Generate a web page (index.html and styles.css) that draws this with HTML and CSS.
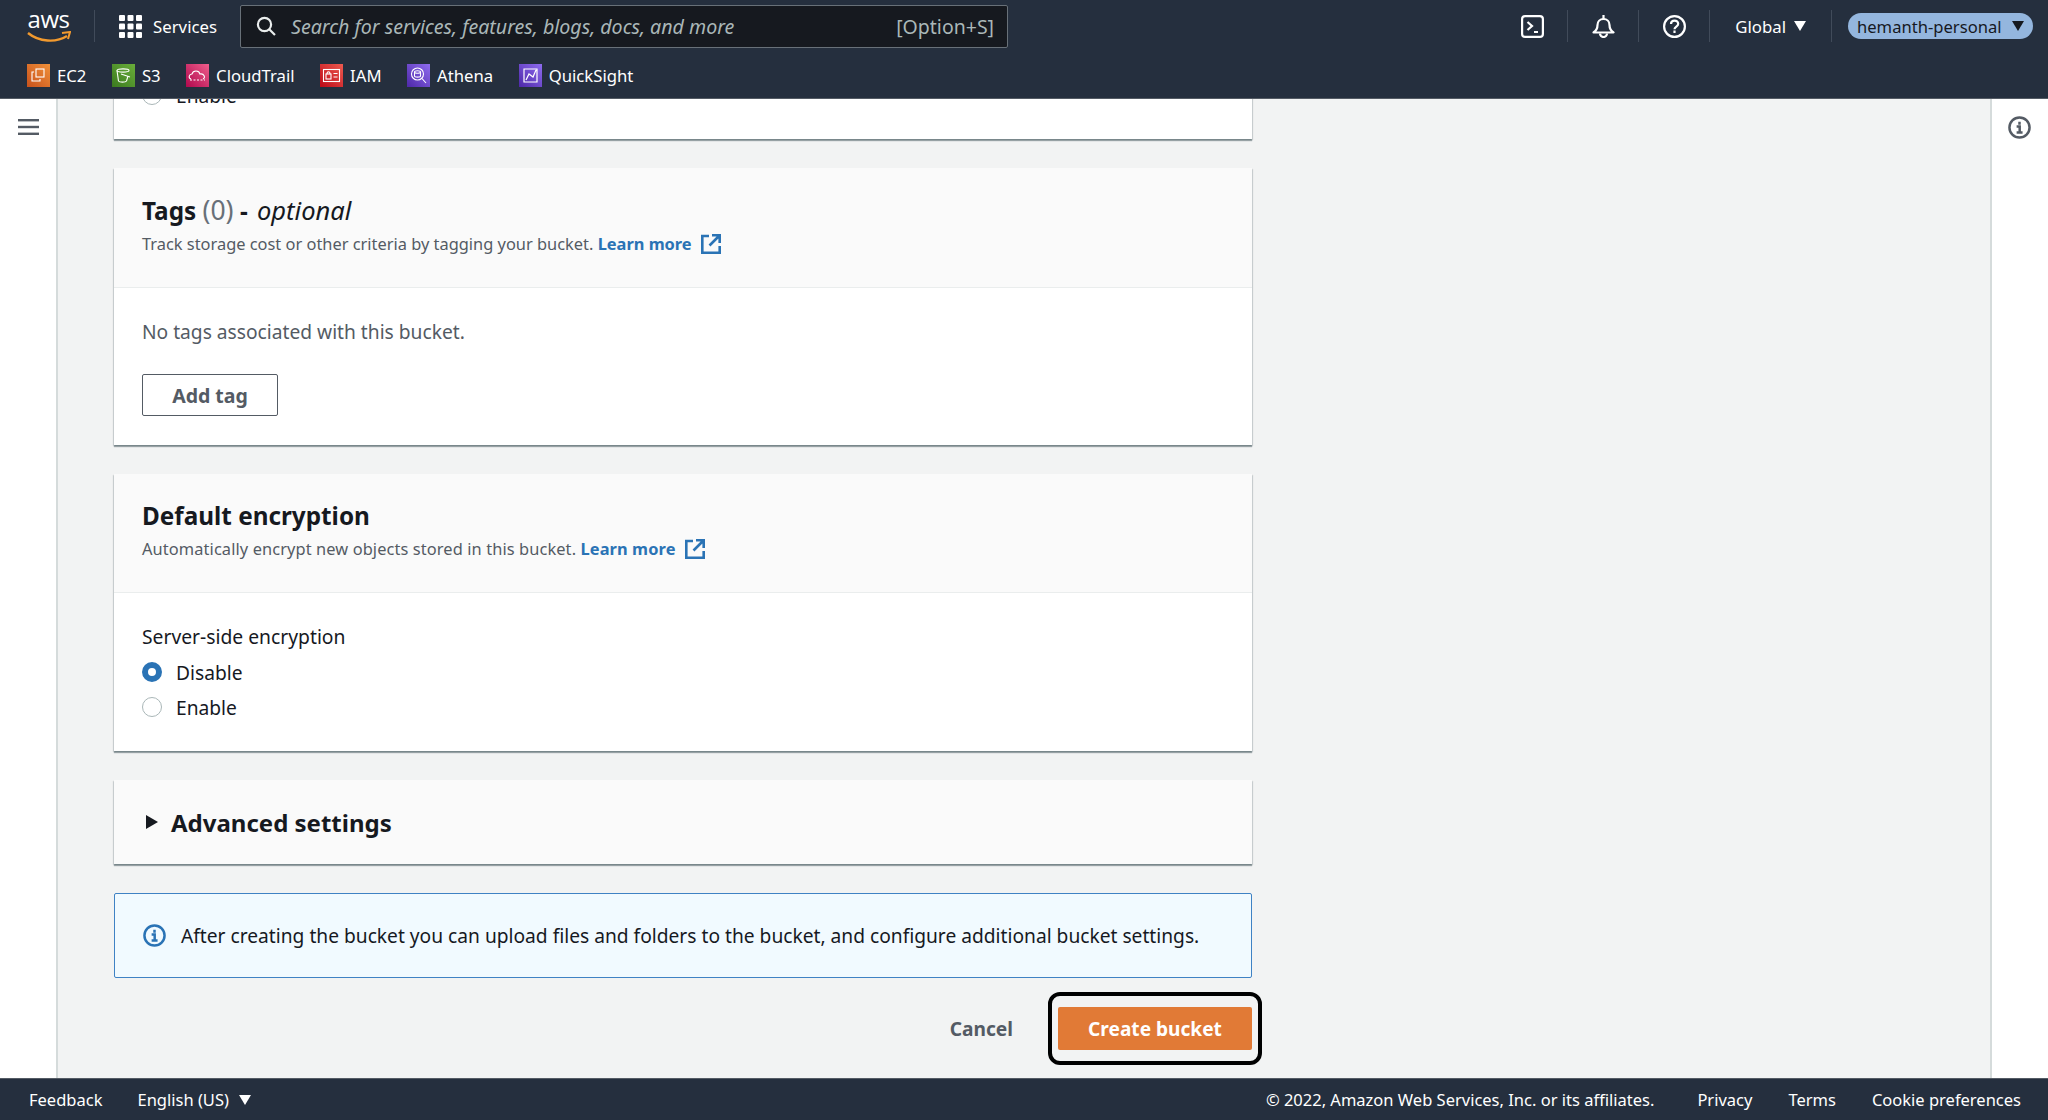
FILE: index.html
```html
<!DOCTYPE html>
<html lang="en">
<head>
<meta charset="utf-8">
<title>Create bucket - S3</title>
<link rel="stylesheet" href="styles.css">
</head>
<body>
<header class="topbar">
  <div class="row-main">
    <div class="logo">
      <span class="logo-text">aws</span>
      <svg class="logo-smile" viewBox="0 0 44 12"><path d="M1 2c11 9 28 10 39 3" fill="none" stroke="#f29a2e" stroke-width="2.4"/><path d="M35 2l8-1-2 7" fill="none" stroke="#f29a2e" stroke-width="2"/></svg>
    </div>
    <span class="sep sep-logo"></span>
    <svg class="grid-icon" viewBox="0 0 23 23" fill="#fff"><rect width="6" height="6" rx="1"/><rect x="8.5" width="6" height="6" rx="1"/><rect x="17" width="6" height="6" rx="1"/><rect y="8.5" width="6" height="6" rx="1"/><rect x="8.5" y="8.5" width="6" height="6" rx="1"/><rect x="17" y="8.5" width="6" height="6" rx="1"/><rect y="17" width="6" height="6" rx="1"/><rect x="8.5" y="17" width="6" height="6" rx="1"/><rect x="17" y="17" width="6" height="6" rx="1"/></svg>
    <span class="services">Services</span>
    <div class="search">
      <svg class="search-icon" viewBox="0 0 20 20" fill="none" stroke="#eaeded" stroke-width="2.2"><circle cx="8.5" cy="8.5" r="6.6"/><path d="M13.5 13.5l5.5 5.5"/></svg>
      <span class="search-text">Search for services, features, blogs, docs, and more</span>
      <span class="search-key">[Option+S]</span>
    </div>
    <div class="nav-right">
      <svg class="nav-icon" viewBox="0 0 23 23" fill="none" stroke="#fff" stroke-width="2.2"><rect x="1.1" y="1.1" width="20.8" height="20.8" rx="3"/><path d="M6.500 7l4.500 4-4.500 4M13 17h4"/></svg>
      <span class="sep sep-icon"></span>
      <svg class="nav-icon" viewBox="0 0 23 23" fill="none" stroke="#fff" stroke-width="2.200"><path d="M1.500 17.500c3-2 4-3.500 4-7.500 0-3.500 2.500-6 6-6s6 2.500 6 6c0 4 1 5.500 4 7.500z" stroke-linejoin="round"/><path d="M11.500 0v4M8 18.500a3.500 3.500 0 0 0 7 0"/></svg>
      <span class="sep sep-icon"></span>
      <svg class="nav-icon" viewBox="0 0 23 23" fill="none" stroke="#fff" stroke-width="2.200"><circle cx="11.500" cy="11.500" r="10.400"/><path d="M8 9c0-4.500 7.200-4.500 7.200-.2 0 2.800-3.700 2.700-3.700 5.400"/><path d="M11.500 15.500v2.500"/></svg>
      <span class="sep sep-icon sep-last"></span>
      <span class="region">Global<i class="caret caret-white"></i></span>
      <span class="sep sep-region"></span>
      <span class="account">hemanth-personal<i class="caret caret-dark"></i></span>
    </div>
  </div>
  <nav class="row-fav">
    <a class="fav"><svg class="fav-icon ec2" viewBox="0 0 23 23" fill="none" stroke="#fff" stroke-width="1.100"><rect x="9" y="5" width="8" height="8"/><path d="M7 8H5v9h8v-2"/></svg>EC2</a>
    <a class="fav"><svg class="fav-icon s3" viewBox="0 0 23 23" fill="none" stroke="#fff" stroke-width="1.100"><ellipse cx="11" cy="6.500" rx="6" ry="1.600"/><path d="M5 6.500l1.500 10.500c1 1.500 7 1.500 8 0L16 12M9 10l9 3"/></svg>S3</a>
    <a class="fav"><svg class="fav-icon trail" viewBox="0 0 23 23" fill="none" stroke="#fff" stroke-width="1.100"><path d="M5 15c-3-1-2-5 1-5 1-4 7-4 8 0 4-1 6 4 3 5"/><path d="M4 16h15" stroke-dasharray="2 1.500"/></svg>CloudTrail</a>
    <a class="fav"><svg class="fav-icon iam" viewBox="0 0 23 23" fill="none" stroke="#fff" stroke-width="1.100"><rect x="3.500" y="5.500" width="16" height="12"/><rect x="6" y="10" width="5" height="5"/><path d="M7 10c0-3 3-3 3 0M13.500 9.500h4M13.500 13h4"/></svg>IAM</a>
    <a class="fav"><svg class="fav-icon athena" viewBox="0 0 23 23" fill="none" stroke="#fff" stroke-width="1.100"><circle cx="10.500" cy="10" r="6"/><ellipse cx="10.500" cy="8" rx="3" ry="1.200"/><path d="M7.500 8v4c0 1.500 6 1.500 6 0V8M15 14.500l4 4.500"/></svg>Athena</a>
    <a class="fav"><svg class="fav-icon quick" viewBox="0 0 23 23" fill="none" stroke="#fff" stroke-width="1.200"><path d="M5 5v13h13V5zM7 16l3-6 4 3 3-7"/></svg>QuickSight</a>
  </nav>
</header>

<div class="shell">
  <aside class="rail rail-left">
    <svg class="rail-icon menu-icon" viewBox="0 0 21 16" fill="#545b64"><rect width="21" height="2.400"/><rect y="6.800" width="21" height="2.400"/><rect y="13.600" width="21" height="2.400"/></svg>
  </aside>
  <main class="content">
    <section class="card">
      <div class="card-body">
        <div class="radio-row"><span class="radio"></span>Enable</div>
      </div>
    </section>

    <section class="card">
      <div class="card-head card-head-tags">
        <h2 class="card-title">Tags <span class="count">(0)</span> <span class="dash">-</span> <em class="optional">optional</em></h2>
        <p class="card-sub">Track storage cost or other criteria by tagging your bucket. <a class="link">Learn more<svg class="ext" viewBox="0 0 20 20" fill="none" stroke="#2a73b5" stroke-width="2.600"><path d="M8 2H1.300v16.700h17.400V12M11 1.300h7.700V9M18.500 1.500L8.500 11.500"/></svg></a></p>
      </div>
      <div class="card-body card-body-tags">
        <p class="muted">No tags associated with this bucket.</p>
        <button class="btn-normal">Add tag</button>
      </div>
    </section>

    <section class="card">
      <div class="card-head">
        <h2 class="card-title">Default encryption</h2>
        <p class="card-sub card-sub-wide">Automatically encrypt new objects stored in this bucket. <a class="link">Learn more<svg class="ext" viewBox="0 0 20 20" fill="none" stroke="#2a73b5" stroke-width="2.600"><path d="M8 2H1.300v16.700h17.400V12M11 1.300h7.700V9M18.500 1.500L8.500 11.500"/></svg></a></p>
      </div>
      <div class="card-body">
        <div class="field-label">Server-side encryption</div>
        <div class="radio-row"><span class="radio radio-on"></span>Disable</div>
        <div class="radio-row"><span class="radio"></span>Enable</div>
      </div>
    </section>

    <section class="card card-collapsed">
      <svg class="expand" viewBox="0 0 12 14" fill="#16191f"><path d="M0 0l12 7-12 7z"/></svg>
      <h2 class="collapsed-title">Advanced settings</h2>
    </section>

    <div class="alert">
      <svg class="alert-icon" viewBox="0 0 24 24" fill="none" stroke="#2a73b5" stroke-width="2.600"><circle cx="12" cy="12" r="10.500"/><path d="M9 11h3.200v6M9 17.200h6.200M12 6v3" /></svg>
      <span>After creating the bucket you can upload files and folders to the bucket, and configure additional bucket settings.</span>
    </div>

    <div class="actions">
      <button class="btn-cancel">Cancel</button>
      <span class="focus-ring"><button class="btn-primary">Create bucket</button></span>
    </div>
  </main>
  <aside class="rail rail-right">
    <svg class="rail-icon info-icon" viewBox="0 0 24 24" fill="none" stroke="#545b64" stroke-width="2.600"><circle cx="12" cy="12" r="10.500"/><path d="M9 11h3.200v6M9 17.200h6.200M12 6v3"/></svg>
  </aside>
</div>

<footer class="footer">
  <a class="foot-feedback">Feedback</a>
  <a class="foot-lang">English (US)<i class="caret caret-white"></i></a>
  <span class="foot-copy">© 2022, Amazon Web Services, Inc. or its affiliates.</span>
  <a class="foot-link foot-link-first">Privacy</a>
  <a class="foot-link">Terms</a>
  <a class="foot-link">Cookie preferences</a>
</footer>
</body>
</html>
```
FILE: styles.css
```css
* { box-sizing: border-box; }
html, body { height: 100%; }
body {
  margin: 0;
  height: 100vh;
  display: flex;
  flex-direction: column;
  overflow: hidden;
  background: #f2f3f3;
  color: #16191f;
  font-family: "Noto Sans", "Liberation Sans", sans-serif;
  font-size: 19px;
}
p, h2 { margin: 0; }

/* Top navigation */
.topbar {
  flex: none;
  height: 99px;
  background: #252f3e;
  color: #fff;
  border-bottom: 1px solid #545b64;
}
.row-main {
  height: 52px;
  display: flex;
  align-items: center;
  padding-left: 26px;
  padding-right: 15px;
}
.logo {
  width: 45px;
  height: 36px;
  display: flex;
  flex-direction: column;
  align-items: center;
  margin-top: -2px;
}
.logo-text {
  font-family: "Open Sans", sans-serif;
  font-size: 24px;
  line-height: 24px;
  letter-spacing: -.5px;
  color: #fff;
}
.logo-smile { width: 44px; height: 12px; }
.sep { width: 1px; height: 32px; background: #414b5a; flex: none; }
.sep-logo { margin-left: 23px; }
.grid-icon { width: 23px; height: 23px; margin-left: 24px; flex: none; }
.services { margin-left: 11px; font-size: 16.800px; color: #fff; }
.search {
  margin-left: 23px;
  width: 768px;
  height: 43px;
  background: #16191f;
  border: 1.500px solid #687078;
  border-radius: 2px;
  display: flex;
  align-items: center;
  padding: 0 13px 0 15px;
  color: #aab7b8;
}
.search-icon { width: 20px; height: 20px; flex: none; }
.search-text { margin-left: 15px; font-style: italic; font-size: 19.600px; flex: 1; white-space: nowrap; }
.search-key { font-size: 19.500px; }
.nav-right { margin-left: auto; display: flex; align-items: center; }
.nav-icon { width: 23px; height: 23px; flex: none; }
.sep-icon { margin: 0 24px 0 23px; }
.sep-last { margin-right: 25px; }
.region { font-size: 16.800px; display: flex; align-items: center; }
.region .caret { margin-left: 8px; }
.sep-region { margin: 0 16px 0 25px; }
.account {
  height: 26px;
  width: 185px;
  border-radius: 13px;
  background: #94b6de;
  color: #16191f;
  font-size: 16.600px;
  display: flex;
  align-items: center;
  padding-left: 9px;
  white-space: nowrap;
}
.caret {
  display: inline-block;
  width: 0;
  height: 0;
  margin-left: 10px;
  border-left: 6px solid transparent;
  border-right: 6px solid transparent;
  border-top: 10px solid #fff;
}
.caret-dark { border-top-color: #16191f; }
.row-fav {
  height: 46px;
  display: flex;
  align-items: center;
  padding-left: 27px;
  gap: 25.500px;
  font-size: 16.700px;
}
.fav { display: flex; align-items: center; gap: 7px; color: #fff; }
.fav-icon { width: 23px; height: 23px; flex: none; }
.ec2 { background: linear-gradient(45deg, #c8511b, #f0913a); }
.s3 { background: linear-gradient(45deg, #3b7a1f, #6aae3a); }
.trail { background: linear-gradient(45deg, #b0084d, #ef5e8c); }
.iam { background: linear-gradient(45deg, #bd0816, #ed5b50); }
.athena { background: linear-gradient(45deg, #4d27a8, #8f6cef); }
.quick { background: linear-gradient(45deg, #4d27a8, #8f6cef); }

/* Shell */
.shell { flex: 1; min-height: 0; display: flex; }
.rail {
  flex: none;
  width: 58px;
  background: #fff;
  display: flex;
  justify-content: center;
  padding-top: 20px;
}
.rail-left { border-right: 2px solid #d5dbdb; }
.rail-right { border-left: 2px solid #d5dbdb; padding-right: 2px; }
.rail-icon { flex: none; }
.menu-icon { width: 21px; height: 16px; }
.info-icon { width: 23px; height: 23px; margin-top: -3px; }

.content {
  flex: 1;
  min-width: 0;
  padding: 0 0 13px 56px;
  display: flex;
  flex-direction: column;
  justify-content: flex-end;
  overflow: hidden;
}
.card {
  flex: none;
  width: 1138px;
  background: #fff;
  margin-bottom: 29px;
  box-shadow: 0 2px 1px 0 rgba(0, 28, 36, .35), 1px 1px 1px 0 rgba(0, 28, 36, .12), -1px 1px 1px 0 rgba(0, 28, 36, .12);
}
.card-head {
  height: 119px;
  padding: 26px 28px 0;
  background: #fafafa;
  border-bottom: 1px solid #eaeded;
}
.card-head-tags { height: 120px; }
.card-title { font-size: 24.300px; line-height: 32px; font-weight: 700; }
.count { font-weight: 400; color: #687078; font-size: 26.500px; }
.dash { margin: 0 1px 0 0; }
.optional { font-weight: 400; font-style: italic; font-size: 25.500px; margin-left: 2px; }
.card-sub {
  margin-top: 6px;
  font-size: 16.400px;
  line-height: 22px;
  color: #545b64;
  white-space: nowrap;
}
.card-sub-wide { letter-spacing: .1px; }
.link { color: #2a73b5; font-weight: 700; display: inline-flex; align-items: center; }
.ext { width: 20px; height: 20px; margin-left: 9px; }
.card-body { padding: 32px 28px 32px; }
.card-body-tags { padding-bottom: 29px; }
.muted { font-size: 19.200px; line-height: 24px; color: #545b64; }
.btn-normal {
  display: block;
  margin-top: 30px;
  width: 136px;
  height: 42px;
  background: #fff;
  border: 1.500px solid #545b64;
  border-radius: 2px;
  color: #545b64;
  font: 700 19.500px "Noto Sans", sans-serif;
}
.field-label { font-size: 19.300px; line-height: 24px; margin-bottom: 11px; }
.radio-row {
  display: flex;
  align-items: center;
  gap: 14px;
  height: 24px;
  font-size: 19.200px;
}
.radio-row + .radio-row { margin-top: 11px; }
.radio {
  width: 20px;
  height: 20px;
  border-radius: 50%;
  border: 1.500px solid #aab7b8;
  background: #fff;
  flex: none;
}
.radio-on { border: 6px solid #2a73b5; }
.card-collapsed {
  height: 84px;
  background: #fafafa;
  display: flex;
  align-items: center;
  padding-left: 32px;
}
.expand { width: 12px; height: 14px; flex: none; }
.collapsed-title { margin-left: 13px; font-size: 24px; font-weight: 700; }
.alert {
  flex: none;
  width: 1138px;
  height: 85px;
  background: #f1faff;
  border: 1.500px solid #3f82c4;
  border-radius: 2px;
  display: flex;
  align-items: center;
  padding-left: 28px;
  font-size: 19.200px;
  margin-bottom: 14px;
}
.alert-icon { width: 23px; height: 23px; flex: none; margin-right: 15px; }
.actions {
  flex: none;
  width: 1138px;
  height: 73px;
  display: flex;
  align-items: center;
  justify-content: flex-end;
}
.btn-cancel {
  background: none;
  border: 0;
  padding: 0;
  margin-right: 35px;
  color: #545b64;
  font: 700 19.200px "Noto Sans", sans-serif;
}
.focus-ring {
  display: block;
  margin-right: -10px;
  padding: 11px 6px 11px 6px;
  border: 4px solid #000;
  border-radius: 12px;
}
.btn-primary {
  display: block;
  width: 194px;
  height: 43px;
  background: #e17a36;
  border: 0;
  border-radius: 2px;
  color: #fff;
  font: 700 19.100px "Noto Sans", sans-serif;
}

/* Footer */
.footer {
  flex: none;
  height: 42px;
  background: #252f3e;
  border-top: 1px solid #545b64;
  color: #fff;
  display: flex;
  align-items: center;
  padding: 0 27px 0 29px;
  font-size: 16.500px;
}
.foot-lang { margin-left: 35px; display: flex; align-items: center; }
.foot-copy { margin-left: auto; }
.foot-link { margin-left: 36px; }
.foot-link-first { margin-left: 43px; }
```
